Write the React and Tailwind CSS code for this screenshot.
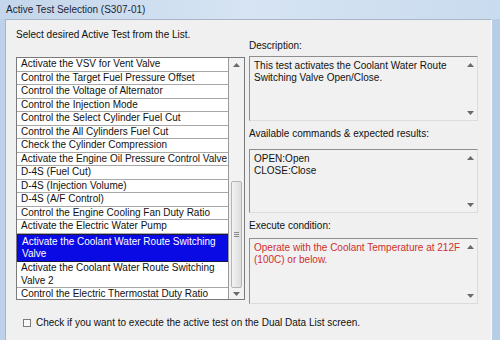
import React from "react"

const items = [
    ["Activate the VSV for Vent Valve"],
    ["Control the Target Fuel Pressure Offset"],
    ["Control the Voltage of Alternator"],
    ["Control the Injection Mode"],
    ["Control the Select Cylinder Fuel Cut"],
    ["Control the All Cylinders Fuel Cut"],
    ["Check the Cylinder Compression"],
    ["Activate the Engine Oil Pressure Control Valve"],
    ["D-4S (Fuel Cut)"],
    ["D-4S (Injection Volume)"],
    ["D-4S (A/F Control)"],
    ["Control the Engine Cooling Fan Duty Ratio"],
    ["Activate the Electric Water Pump"],
    ["Activate the Coolant Water Route Switching", "Valve"],
    ["Activate the Coolant Water Route Switching", "Valve 2"],
    ["Control the Electric Thermostat Duty Ratio"],
]

const SELECTED = 13

function ArrowUp() {
    return (
        <svg width="7" height="4" viewBox="0 0 7 4">
            <path d="M0 4 L3.5 0 L7 4 Z" fill="#6a6a6a" />
        </svg>
    )
}

function ArrowDown() {
    return (
        <svg width="7" height="4" viewBox="0 0 7 4">
            <path d="M0 0 L3.5 4 L7 0 Z" fill="#6a6a6a" />
        </svg>
    )
}

function TextBox({ lines, red, height }) {
    return (
        <div
            className={`flex border-t border-l border-[#8e8e8e] border-r border-b border-r-[#dcdcdc] border-b-[#dcdcdc] bg-[#f1f1f1] ${height}`}
        >
            <div className={`flex-1 pl-[4px] pt-[3px] leading-[11.7px] ${red ? "text-[#cf2f2f] pl-[2px]" : "text-[#111]"}`}>
                {lines.map((l, i) => (
                    <div key={i} className="whitespace-nowrap">{l}</div>
                ))}
            </div>
            <div className="w-[14px] flex flex-col items-center justify-between pt-[6px] pb-[5px]">
                <ArrowUp />
                <ArrowDown />
            </div>
        </div>
    )
}

export default function App() {
    return (
        <div
            className="w-[500px] h-[340px] flex flex-col bg-gradient-to-r from-[#bdd1e9] via-[#cadcf0] to-[#b7cde6] overflow-hidden"
            style={{ fontFamily: '"Liberation Sans", Arial, sans-serif' }}
        >
            {/* title bar */}
            <div className="h-[19px] flex items-center px-[6px] text-[10px] text-[#1b2532] bg-gradient-to-r from-[#c4d6eb] via-[#d6e4f3] to-[#c9dbee]">
                Active Test Selection (S307-01)
            </div>

            {/* body */}
            <div className="flex-1 ml-[5px] mr-[8px] bg-[#f0f0f0] border-t border-l border-[#a7b5c6] border-r border-r-[#fbfbfb] flex flex-col text-[10px] text-[#111]">
                <div className="flex pl-[10px] pt-[9px]">
                    {/* left column */}
                    <div className="w-[229px] flex flex-col">
                        <div className="h-[12px] leading-[12px]">Select desired Active Test from the List.</div>
                        <div className="mt-[16px] h-[243px] flex border border-[#7a7a7a] bg-white">
                            <div className="w-[212px] border-r border-[#9a9a9a] overflow-hidden">
                                {items.map((lines, i) => (
                                    <div
                                        key={i}
                                        className={`px-[4px] leading-[12.5px] border-b whitespace-nowrap ${
                                            i === SELECTED
                                                ? "bg-[#0a0ae4] text-white border border-[#1a1a40] pt-[1px] pb-[0.5px]"
                                                : "border-[#a8a8a8]"
                                        }`}
                                    >
                                        {lines.map((l, j) => (
                                            <div key={j}>{l}</div>
                                        ))}
                                    </div>
                                ))}
                            </div>
                            <div className="flex-1 bg-[#f2f2f2] flex flex-col items-center pt-[5px] pb-[3px]">
                                <ArrowUp />
                                <div className="flex-1" />
                                <div className="w-[11px] h-[107px] rounded-[2px] border border-[#b4b4b4] bg-gradient-to-r from-[#f3f3f3] to-[#dcdcdc] flex flex-col items-center justify-center gap-[1px] mb-[4px]">
                                    <div className="w-[5px] h-px bg-[#8a8a8a]" />
                                    <div className="w-[5px] h-px bg-[#8a8a8a]" />
                                    <div className="w-[5px] h-px bg-[#8a8a8a]" />
                                </div>
                                <ArrowDown />
                            </div>
                        </div>
                    </div>

                    {/* right column */}
                    <div className="w-[229px] ml-[4px] pt-[11px] flex flex-col">
                        <div className="h-[12px] leading-[12px]">Description:</div>
                        <div className="mt-[4px]">
                            <TextBox
                                height="h-[65px]"
                                lines={["This test activates the Coolant Water Route", "Switching Valve Open/Close."]}
                            />
                        </div>
                        <div className="mt-[7px] h-[12px] leading-[12px]">Available commands &amp; expected results:</div>
                        <div className="mt-[9px]">
                            <TextBox height="h-[64px]" lines={["OPEN:Open", "CLOSE:Close"]} />
                        </div>
                        <div className="mt-[7px] h-[12px] leading-[12px]">Execute condition:</div>
                        <div className="mt-[6px]">
                            <TextBox
                                red
                                height="h-[66px]"
                                lines={["Operate with the Coolant Temperature at 212F", "(100C) or below."]}
                            />
                        </div>
                    </div>
                </div>

                {/* checkbox */}
                <div className="flex items-center pl-[17px] mt-[13px]">
                    <div className="w-[8px] h-[8px] border border-[#7a7a7a] bg-[#fafafa]" />
                    <span className="ml-[5px] leading-[12px]">
                        Check if you want to execute the active test on the Dual Data List screen.
                    </span>
                </div>
            </div>
        </div>
    )
}
